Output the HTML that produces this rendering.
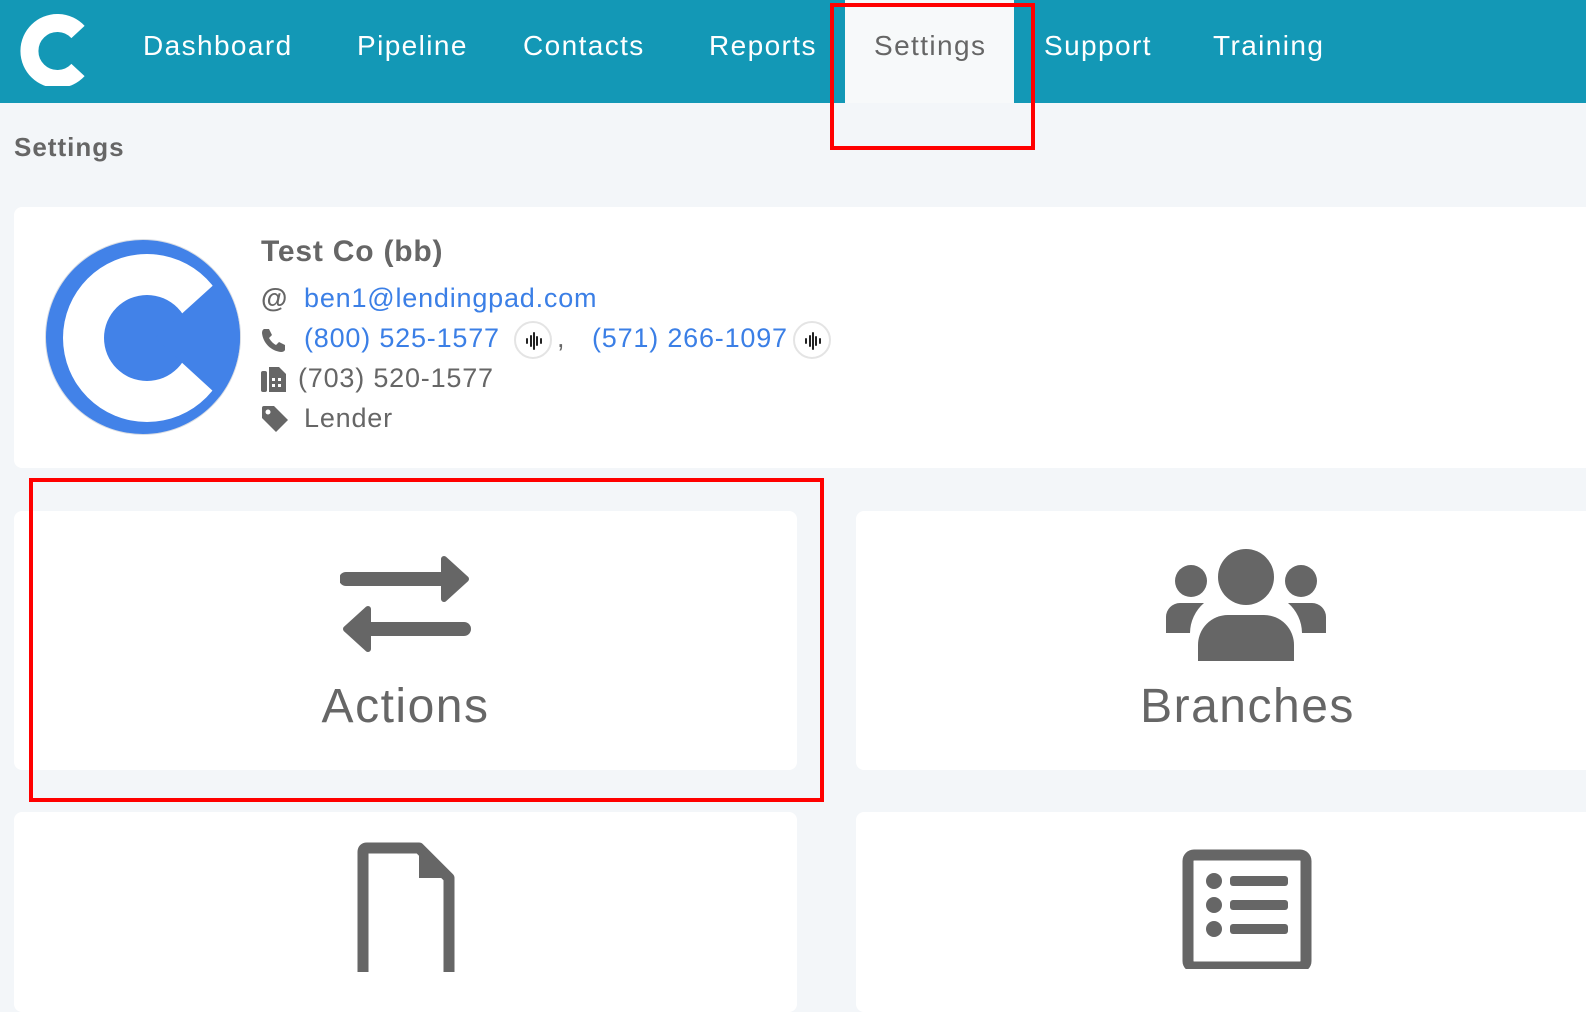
<!DOCTYPE html>
<html><head><meta charset="utf-8"><style>
*{margin:0;padding:0;box-sizing:border-box}
body{width:1586px;height:966px;overflow:hidden;background:#f3f6f9;font-family:"Liberation Sans",sans-serif;position:relative;color:#666}
.nav{position:absolute;left:0;top:0;width:1586px;height:103px;background:#1398b6}
.nav span{position:absolute;top:30px;font-size:28px;color:#fff;letter-spacing:1.4px}
.tab{position:absolute;left:845px;top:0;width:169px;height:103px;background:#f7f9fa}
.red{position:absolute;border:4px solid #f00}
.card{position:absolute;background:#fff;border-radius:8px}
.t{position:absolute;font-size:27px;letter-spacing:0.8px}
.blue{color:#3b7fe6}
.big{position:absolute;font-size:48px;color:#666;width:100%;text-align:center;letter-spacing:1.5px}
.wave{position:absolute;width:38px;height:38px;border:2px solid #e4e4e4;border-radius:50%;background:#fff}
.wave svg{position:absolute;left:8px;top:8px}
</style></head><body>
<div class="nav">
<svg style="position:absolute;left:18px;top:14px" width="68" height="72" viewBox="0 0 68 72"><path d="M60 18 A28 28 0 1 0 60 56" fill="none" stroke="#fff" stroke-width="18"/></svg>
<span style="left:143px">Dashboard</span>
<span style="left:357px">Pipeline</span>
<span style="left:523px">Contacts</span>
<span style="left:709px">Reports</span>
<div class="tab"></div>
<span style="left:874px;color:#666">Settings</span>
<span style="left:1044px">Support</span>
<span style="left:1213px">Training</span>
</div>
<div class="red" style="left:830px;top:3px;width:205px;height:147px"></div>
<div style="position:absolute;left:14px;top:132px;font-size:26px;font-weight:bold;color:#666;letter-spacing:1px">Settings</div>
<div class="card" style="left:14px;top:207px;width:1600px;height:261px">
<div class="t" style="left:247px;top:28px;font-weight:bold;font-size:30px">Test Co (bb)</div>
<div class="t" style="left:247px;top:76px;font-weight:bold">@</div>
<div class="t blue" style="left:290px;top:76px">ben1@lendingpad.com</div>
<svg style="position:absolute;left:247px;top:120px" width="26" height="26" viewBox="0 0 26 26"><path d="M24 18 L24 23 Q23 25 20 25 C10 24 2 16 1 6 Q1 3 3 2 L8 2 L11 8 L8 11 Q11 16 15 18 L18 15 Z" fill="#666"/></svg>
<div class="t blue" style="left:290px;top:116px">(800) 525-1577</div>
<div class="wave" style="left:500px;top:114px"><svg width="20" height="20" viewBox="0 0 20 20"><g stroke="#222" stroke-width="2" stroke-linecap="round"><path d="M3 8v4M7 5v10M10 2v16M13 6v8M17 8v4"/></g></svg></div>
<div class="t" style="left:543px;top:116px">,</div>
<div class="t blue" style="left:578px;top:116px">(571) 266-1097</div>
<div class="wave" style="left:779px;top:114px"><svg width="20" height="20" viewBox="0 0 20 20"><g stroke="#222" stroke-width="2" stroke-linecap="round"><path d="M3 8v4M7 5v10M10 2v16M13 6v8M17 8v4"/></g></svg></div>
<svg style="position:absolute;left:247px;top:159px" width="26" height="26" viewBox="0 0 26 26"><rect x="0" y="5" width="6" height="21" rx="2" fill="#666"/><path d="M8 1 H18 L25 8 V26 H8 Z" fill="#666"/><g fill="#fff"><rect x="11" y="12" width="3" height="3"/><rect x="17" y="12" width="3" height="3"/><rect x="11" y="18" width="3" height="3"/><rect x="17" y="18" width="3" height="3"/></g></svg>
<div class="t" style="left:284px;top:156px">(703) 520-1577</div>
<svg style="position:absolute;left:247px;top:198px" width="28" height="28" viewBox="0 0 28 28"><path d="M1 3 Q1 1 3 1 H13 L27 15 L15 27 L1 13 Z" fill="#666"/><circle cx="7" cy="7" r="2.5" fill="#fff"/></svg>
<div class="t" style="left:290px;top:196px">Lender</div>
</div>
<svg style="position:absolute;left:0;top:0" width="260" height="450" viewBox="0 0 260 450"><defs><clipPath id="cc"><circle cx="143" cy="337" r="97"/></clipPath></defs><circle cx="143" cy="337" r="98" fill="#d9dde3"/><circle cx="143" cy="337" r="97" fill="#4282e8"/><g clip-path="url(#cc)"><circle cx="147" cy="338" r="84" fill="#fff"/><circle cx="147" cy="338" r="43" fill="#4282e8"/><polygon points="155,338 250,252 250,425" fill="#4282e8"/></g></svg>
<div class="card" style="left:14px;top:511px;width:783px;height:259px">
<svg style="position:absolute;left:326px;top:42px" width="132" height="104" viewBox="0 0 132 104"><path d="M6 26 H106" stroke="#666" stroke-width="14" stroke-linecap="round"/><path d="M104 6 L126 26 L104 46 Z" fill="#666" stroke="#666" stroke-width="6" stroke-linejoin="round"/><path d="M26 76 H124" stroke="#666" stroke-width="14" stroke-linecap="round"/><path d="M28 56 L6 76 L28 96 Z" fill="#666" stroke="#666" stroke-width="6" stroke-linejoin="round"/></svg>
<div class="big" style="top:168px">Actions</div>
</div>
<div class="card" style="left:856px;top:511px;width:800px;height:259px">
<svg style="position:absolute;left:308px;top:36px" width="164" height="114" viewBox="0 0 164 114"><circle cx="82" cy="30" r="28" fill="#666"/><path d="M34 114 V98 A30 30 0 0 1 64 68 H100 A30 30 0 0 1 130 98 V114 Z" fill="#666"/><circle cx="27" cy="34" r="16" fill="#666"/><circle cx="137" cy="34" r="16" fill="#666"/><path d="M2 86 V70 A14 14 0 0 1 16 56 H40 A40 40 0 0 0 26 86 Z" fill="#666"/><path d="M162 86 V70 A14 14 0 0 0 148 56 H124 A40 40 0 0 1 138 86 Z" fill="#666"/></svg>
<div class="big" style="left:-400px;width:1583px;top:168px">Branches</div>
</div>
<div class="card" style="left:14px;top:812px;width:783px;height:200px">
<svg style="position:absolute;left:343px;top:30px" width="100" height="130" viewBox="0 0 100 130"><path d="M6 130 V10 Q6 6 10 6 H62 L92 36 V130" fill="none" stroke="#666" stroke-width="11" stroke-linejoin="round"/><path d="M62 8 V36 H90 Z" fill="#666"/></svg>
</div>
<div class="card" style="left:856px;top:812px;width:800px;height:200px">
<svg style="position:absolute;left:326px;top:37px" width="130" height="120" viewBox="0 0 130 120"><rect x="6" y="6" width="118" height="112" rx="6" fill="none" stroke="#666" stroke-width="11"/><circle cx="32" cy="32" r="8" fill="#666"/><circle cx="32" cy="56" r="8" fill="#666"/><circle cx="32" cy="80" r="8" fill="#666"/><rect x="48" y="27" width="58" height="10" rx="3" fill="#666"/><rect x="48" y="51" width="58" height="10" rx="3" fill="#666"/><rect x="48" y="75" width="58" height="10" rx="3" fill="#666"/></svg>
</div>
<div class="red" style="left:29px;top:478px;width:795px;height:324px"></div>
</body></html>
